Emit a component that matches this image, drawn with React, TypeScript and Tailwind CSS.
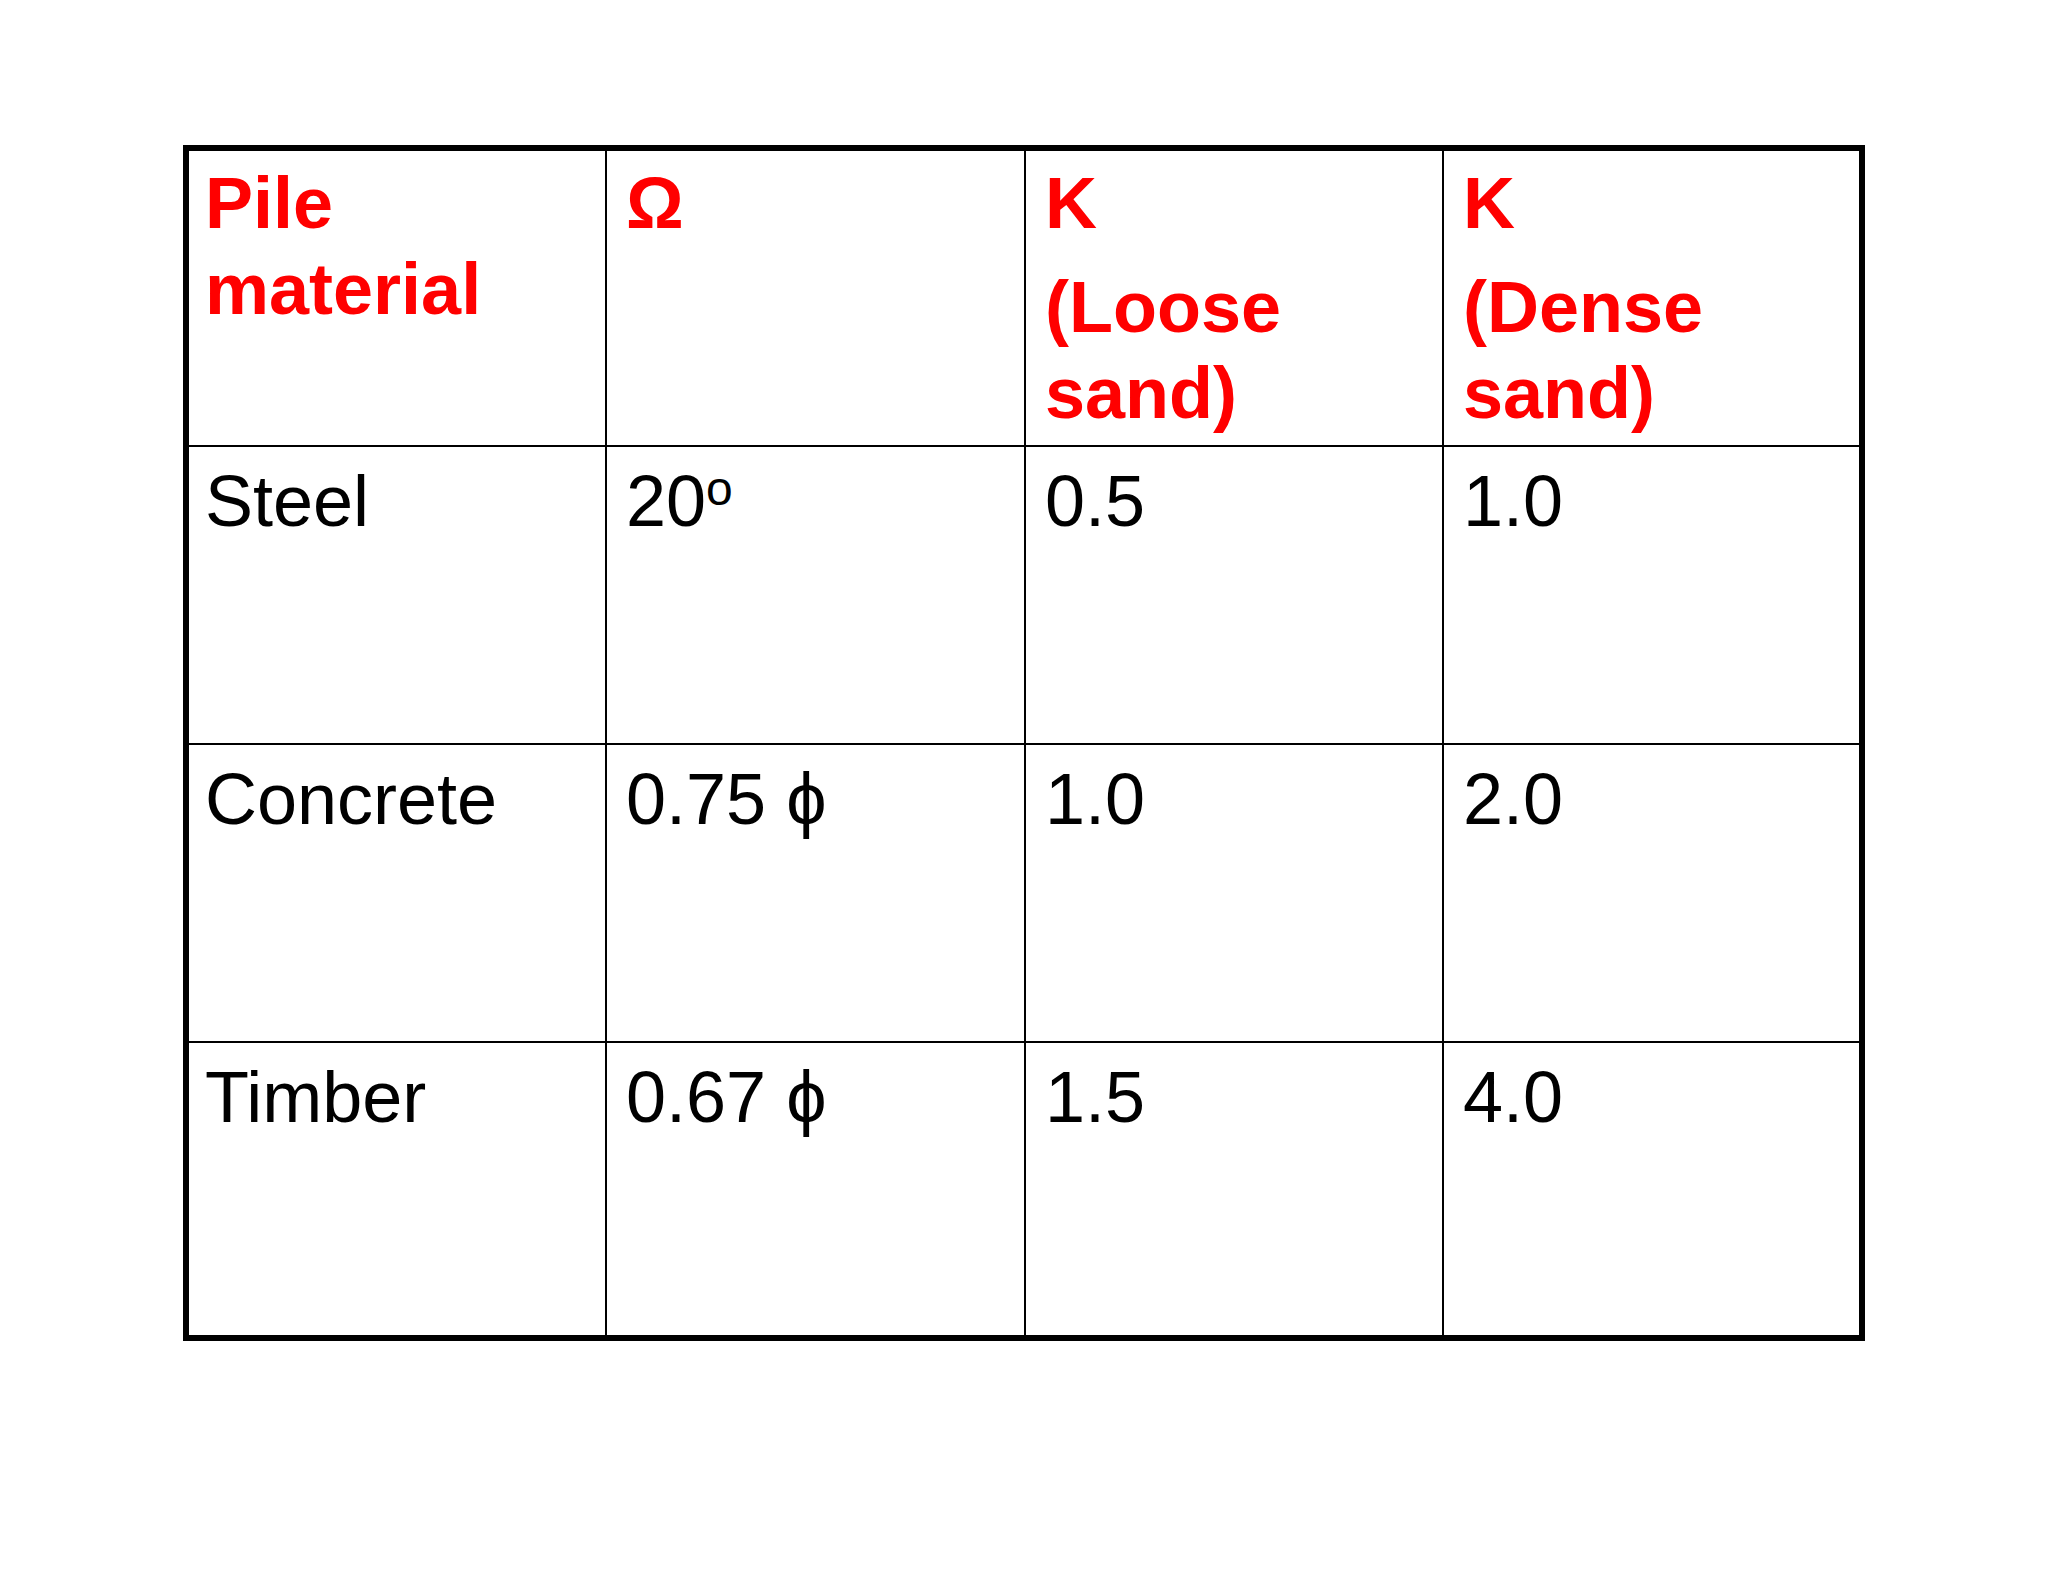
const rows = [
  { material: "Steel", omega: "20", sup: "o", loose: "0.5", dense: "1.0", h: "h-[298px]" },
  { material: "Concrete", omega: "0.75 ϕ", sup: "", loose: "1.0", dense: "2.0", h: "h-[298px]" },
  { material: "Timber", omega: "0.67 ϕ", sup: "", loose: "1.5", dense: "4.0", h: "h-[292px]" },
];

function HeadCell({ children, last, first }: { children: React.ReactNode; last?: boolean; first?: boolean }) {
  return (
    <div
      className={`h-[296px] border-b-2 border-black pr-[12px] pt-[9px] text-[72px] leading-[86px] font-bold text-[#ff0000] ${
        first ? "pl-[16px]" : "pl-[19px]"
      } ${last ? "" : "border-r-2"}`}
    >
      {children}
    </div>
  );
}

function BodyCell({
  children,
  last,
  first,
  bottom,
  h,
}: {
  children: React.ReactNode;
  last?: boolean;
  first?: boolean;
  bottom?: boolean;
  h: string;
}) {
  return (
    <div
      className={`${h} border-black pr-[12px] pt-[11px] text-[72px] leading-[86px] text-black ${first ? "pl-[16px]" : "pl-[19px]"} ${
        last ? "" : "border-r-2"
      } ${bottom ? "" : "border-b-2"}`}
    >
      {children}
    </div>
  );
}

export default function App() {
  return (
    <div className="w-[2048px] h-[1582px] bg-white pt-[145px] pl-[183px]" style={{ fontFamily: '"Liberation Sans", Arial, sans-serif' }}>
      <div className="w-[1682px] border-[6px] border-black grid grid-cols-[418px_419px_418px_415px]">
        <HeadCell first>
          Pile
          <br />
          material
        </HeadCell>
        <HeadCell>Ω</HeadCell>
        <HeadCell>
          <div>K</div>
          <div className="mt-[18px]">
            (Loose
            <br />
            sand)
          </div>
        </HeadCell>
        <HeadCell last>
          <div>K</div>
          <div className="mt-[18px]">
            (Dense
            <br />
            sand)
          </div>
        </HeadCell>

        {rows.map((r, i) => {
          const bottom = i === rows.length - 1;
          return [
            <BodyCell key={`${i}-m`} h={r.h} bottom={bottom} first>
              {r.material}
            </BodyCell>,
            <BodyCell key={`${i}-o`} h={r.h} bottom={bottom}>
              {r.omega}
              {r.sup && <span className="text-[48px] leading-none align-[21px]">{r.sup}</span>}
            </BodyCell>,
            <BodyCell key={`${i}-l`} h={r.h} bottom={bottom}>
              {r.loose}
            </BodyCell>,
            <BodyCell key={`${i}-d`} h={r.h} bottom={bottom} last>
              {r.dense}
            </BodyCell>,
          ];
        })}
      </div>
    </div>
  );
}
